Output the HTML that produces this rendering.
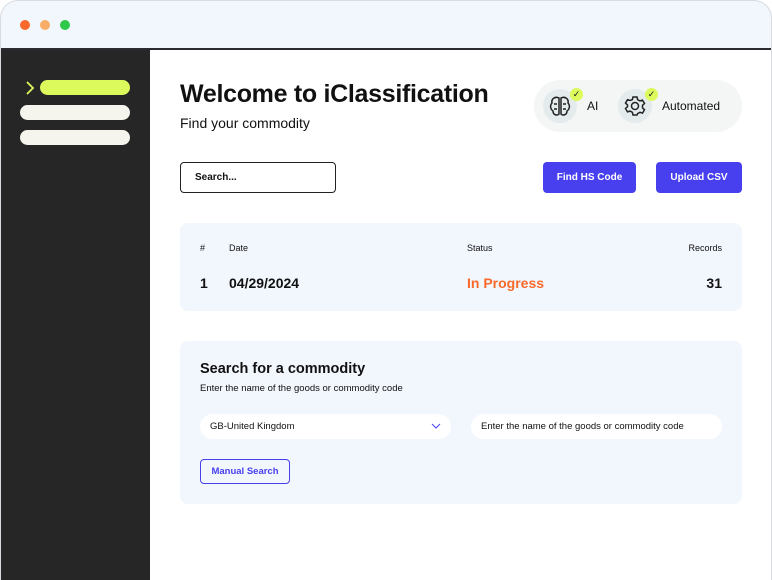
<!DOCTYPE html>
<html><head><meta charset="utf-8"><style>
*{margin:0;padding:0;box-sizing:border-box}
html,body{width:772px;height:580px;overflow:hidden}
body{background:#fff;font-family:"Liberation Sans",sans-serif;position:relative;color:#111}
.win{position:absolute;left:0;top:0;width:772px;height:580px;border-radius:18px 18px 0 0;overflow:hidden}
.frame{position:absolute;left:0;top:0;width:772px;height:580px;border-radius:18px 18px 0 0;border:1px solid #d8dbe0;border-bottom:none;pointer-events:none}
.top{position:absolute;left:0;top:0;width:772px;height:50px;background:#f2f6fd;border-bottom:2px solid #2a2c30}
.dot{position:absolute;top:20px;width:10px;height:10px;border-radius:50%}
.side{position:absolute;left:0;top:50px;width:150px;height:530px;background:#262626}
.bar{position:absolute;left:20px;width:110px;height:15px;border-radius:8px;background:#f5f5ee}
.abs{position:absolute}
.btn{position:absolute;top:162px;height:31px;background:#4840ee;color:#fff;font-size:10px;font-weight:bold;border-radius:4px;text-align:center;line-height:31px}
.card{position:absolute;left:180px;width:562px;background:#f2f6fd;border-radius:8px}
</style></head><body>
<div class="win">
<div class="top">
<div class="dot" style="left:20px;background:#f86a2c"></div>
<div class="dot" style="left:40px;background:#f9ad66"></div>
<div class="dot" style="left:60px;background:#2ec84a"></div>
</div>
<div class="side">
<svg class="abs" style="left:25px;top:31px" width="10" height="14"><path d="M2 1 L8 7 L2 13" stroke="#dcfa5c" stroke-width="1.8" fill="none"/></svg>
<div class="bar" style="left:40px;width:90px;top:30px;background:#dcfa5c"></div>
<div class="bar" style="top:55px"></div>
<div class="bar" style="top:80px"></div>
</div>
<div class="abs" style="left:180px;top:80px;font-size:25px;font-weight:bold;letter-spacing:-0.3px">Welcome to iClassification</div>
<div class="abs" style="left:180px;top:115px;font-size:14px">Find your commodity</div>
<div class="abs" style="left:534px;top:80px;width:208px;height:52px;border-radius:26px;background:#f4f5f5"></div>
<div class="abs" style="left:543px;top:89px;width:34px;height:34px;border-radius:50%;background:#e3ebed"></div>
<div class="abs" style="left:570px;top:88px;width:13px;height:13px;border-radius:50%;background:#dcfa5c;font-size:9px;text-align:center;line-height:13px">✓</div>
<svg class="abs" style="left:549px;top:95px" width="22" height="22" fill="none" stroke="#222" stroke-width="1.5"><path d="M10 3 C6 1 2 4 3 8 C1 10 1 14 4 16 C4 20 8 21 10 19 Z M12 3 C16 1 20 4 19 8 C21 10 21 14 18 16 C18 20 14 21 12 19 Z M5 9 H8 M14 9 h3 M5 14 h3 M14 14 h3"/></svg>
<div class="abs" style="left:587px;top:99px;font-size:12px">AI</div>
<div class="abs" style="left:618px;top:89px;width:34px;height:34px;border-radius:50%;background:#e3ebed"></div>
<div class="abs" style="left:645px;top:88px;width:13px;height:13px;border-radius:50%;background:#dcfa5c;font-size:9px;text-align:center;line-height:13px">✓</div>
<svg class="abs" style="left:624px;top:95px" width="22" height="22" fill="none" stroke="#222" stroke-width="1.5"><circle cx="11" cy="11" r="3.5"/><path d="M9 2h4l.6 2.6 2.3 1.3 2.6-.8 2 3.4-2 1.8v2.6l2 1.8-2 3.4-2.6-.8-2.3 1.3L13 20H9l-.6-2.6-2.3-1.3-2.6.8-2-3.4 2-1.8V9.9l-2-1.8 2-3.4 2.6.8L8.4 4.6Z"/></svg>
<div class="abs" style="left:662px;top:99px;font-size:12px">Automated</div>
<div class="abs" style="left:180px;top:162px;width:156px;height:31px;border:1.5px solid #222;border-radius:4px;font-size:10px;font-weight:bold;padding:9px 14px">Search...</div>
<div class="btn" style="left:543px;width:93px">Find HS Code</div>
<div class="btn" style="left:656px;width:86px">Upload CSV</div>
<div class="card" style="top:223px;height:88px">
<div class="abs" style="left:20px;top:20px;font-size:9px">#</div>
<div class="abs" style="left:49px;top:20px;font-size:9px">Date</div>
<div class="abs" style="left:287px;top:20px;font-size:9px">Status</div>
<div class="abs" style="right:20px;top:20px;font-size:9px">Records</div>
<div class="abs" style="left:20px;top:52px;font-size:14px;font-weight:bold">1</div>
<div class="abs" style="left:49px;top:52px;font-size:14px;font-weight:bold">04/29/2024</div>
<div class="abs" style="left:287px;top:52px;font-size:14px;font-weight:bold;color:#f86a2c">In Progress</div>
<div class="abs" style="right:20px;top:52px;font-size:14px;font-weight:bold">31</div>
</div>
<div class="card" style="top:341px;height:163px">
<div class="abs" style="left:20px;top:20px;font-size:14.5px;font-weight:bold">Search for a commodity</div>
<div class="abs" style="left:20px;top:42px;font-size:9.5px">Enter the name of the goods or commodity code</div>
<div class="abs" style="left:20px;top:73px;width:251px;height:25px;border-radius:13px;background:#fff;font-size:9.5px;padding:7px 10px">GB-United Kingdom</div>
<svg class="abs" style="left:251px;top:82px" width="10" height="7"><path d="M1 1 L5 5 L9 1" stroke="#4840ee" stroke-width="1" fill="none"/></svg>
<div class="abs" style="left:291px;top:73px;width:251px;height:25px;border-radius:13px;background:#fff;font-size:9.5px;padding:7px 10px">Enter the name of the goods or commodity code</div>
<div class="abs" style="left:20px;top:118px;width:90px;height:25px;border:1px solid #4840ee;border-radius:4px;color:#4840ee;font-size:9.5px;font-weight:bold;text-align:center;line-height:23px">Manual Search</div>
</div>
</div>
<div class="frame"></div>
</body></html>
